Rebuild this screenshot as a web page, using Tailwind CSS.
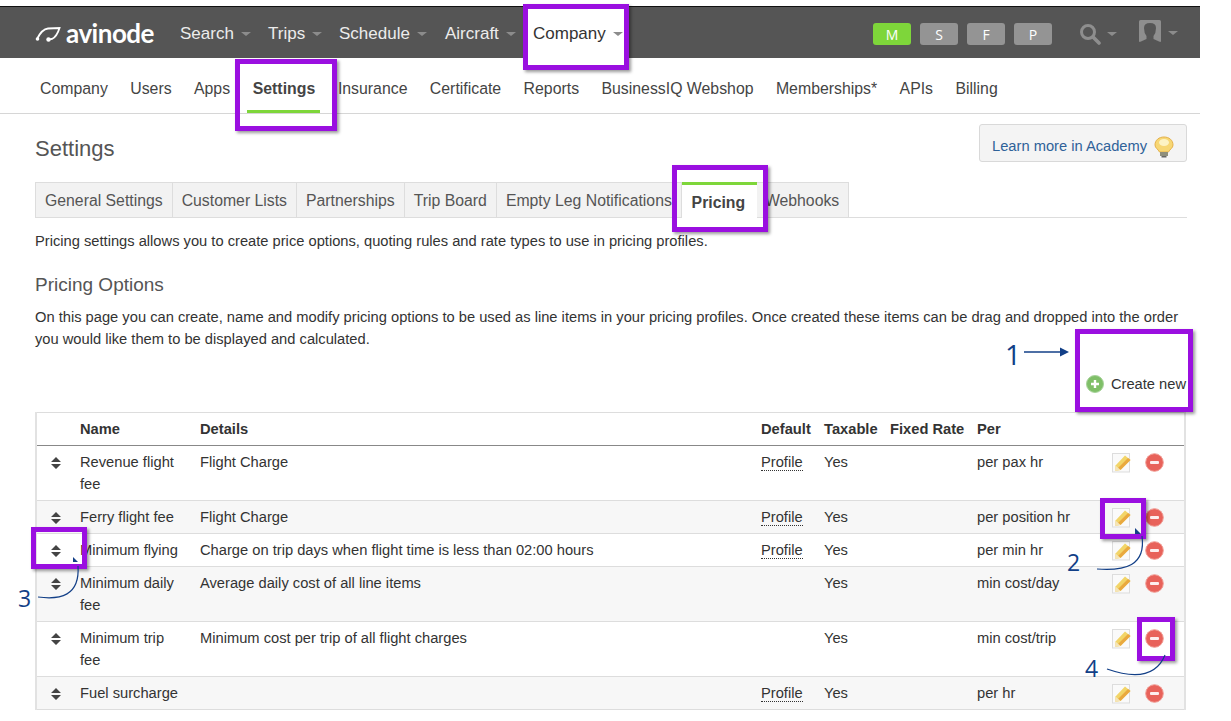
<!DOCTYPE html>
<html lang="en">
  <head>
    <meta charset="UTF-8" />
    <title>Pricing Options</title>
    <script src="https://cdn.jsdelivr.net/npm/@tailwindcss/browser@4"></script>
  </head>
  <body class="bg-white font-['Liberation_Sans',Arial,sans-serif] text-[#333]">
    <div class="relative w-[1200px] h-[711px] pt-[6px] overflow-hidden">
      <!-- Top nav -->
      <nav class="flex items-start h-[52px] bg-[#555] border-t border-[#111] text-[17px] text-[#ececec]">
        <a class="flex items-center ml-[35px] w-[145px] h-[51px] gap-[5px]">
          <svg class="w-[26px] h-[16px] mt-[3px]" viewBox="0 0 26 16" fill="none" stroke="white">
            <path d="M2 13 C5 7 8 3 13 2.500 L24.500 2 C23 7 21 11 17 13 L14 13.500" stroke-width="1.800" stroke-linecap="round" />
            <circle cx="2.500" cy="13" r="1.800" fill="white" stroke="none" />
            <circle cx="13.500" cy="13.500" r="2.200" fill="white" stroke="none" />
          </svg>
          <span class="font-['Lato',sans-serif] font-bold text-[26px] leading-[26px] tracking-[-0.5px] text-white">avinode</span>
        </a>
        <a class="flex items-center h-[51px] pt-[2px] w-[88px]">Search<i class="ml-[7px] w-0 h-0 border-x-[5px] border-t-[4px] border-x-transparent border-t-[#8c8c8c]"></i></a>
        <a class="flex items-center h-[51px] pt-[2px] w-[71px]">Trips<i class="ml-[7px] w-0 h-0 border-x-[5px] border-t-[4px] border-x-transparent border-t-[#8c8c8c]"></i></a>
        <a class="flex items-center h-[51px] pt-[2px] w-[106px]">Schedule<i class="ml-[7px] w-0 h-0 border-x-[5px] border-t-[4px] border-x-transparent border-t-[#8c8c8c]"></i></a>
        <a class="flex items-center h-[51px] pt-[2px] w-[83px]">Aircraft<i class="ml-[7px] w-0 h-0 border-x-[5px] border-t-[4px] border-x-transparent border-t-[#8c8c8c]"></i></a>
        <a class="flex items-center h-[60px] w-[100px] pl-[5px] pb-[7px] bg-white text-[#333]">Company<i class="ml-[7px] w-0 h-0 border-x-[5px] border-t-[4px] border-x-transparent border-t-[#8c8c8c]"></i></a>
        <div class="flex items-center h-[51px] ml-[245px] gap-[9px] text-[14px] font-['Open_Sans',sans-serif] text-white">
          <span class="flex items-center justify-center w-[38px] h-[22px] mt-[3px] rounded-[3px] bg-[#7ed63a]">M</span>
          <span class="flex items-center justify-center w-[38px] h-[22px] mt-[3px] rounded-[3px] bg-[#949494]">S</span>
          <span class="flex items-center justify-center w-[38px] h-[22px] mt-[3px] rounded-[3px] bg-[#949494]">F</span>
          <span class="flex items-center justify-center w-[38px] h-[22px] mt-[3px] rounded-[3px] bg-[#949494]">P</span>
        </div>
        <div class="flex items-center h-[51px] ml-[27px]">
          <svg class="w-[22px] h-[22px] mt-[2px]" viewBox="0 0 22 22" fill="none" stroke="#8e8e8e">
            <circle cx="9" cy="9" r="6.500" stroke-width="3" />
            <path d="M14 14 L20 20" stroke-width="3.600" stroke-linecap="round" />
          </svg>
          <i class="ml-[6px] mt-[2px] w-0 h-0 border-x-[5px] border-t-[4px] border-x-transparent border-t-[#8c8c8c]"></i>
          <svg class="ml-[21px] w-[24px] h-[23px] -mt-[3px]" viewBox="0 0 24 23">
            <path d="M1 1.500 Q1 0 2.500 0 H21.500 Q23 0 23 1.500 V21 Q23 22.500 21 21.500 L15.500 19 V16 Q18 13 18 8 Q18 3 12 3 Q6 3 6 8 Q6 13 8.500 16 V19 L3 21.500 Q1 22.500 1 21 Z" fill="#8e8e8e" />
          </svg>
          <i class="ml-[6px] w-0 h-0 border-x-[5px] border-t-[4px] border-x-transparent border-t-[#8c8c8c]"></i>
        </div>
      </nav>

      <!-- Sub nav -->
      <div class="flex h-[56px] pl-[40px] gap-[22.4px] border-b border-[#d6d6d6] text-[15.85px] text-[#444]">
        <a class="leading-[62px]">Company</a>
        <a class="leading-[62px]">Users</a>
        <a class="leading-[62px]">Apps</a>
        <a class="leading-[62px] h-[55px] -mx-[5px] font-bold border-b-[3px] border-[#7ed63a] w-[73px] text-center">Settings</a>
        <a class="leading-[62px]">Insurance</a>
        <a class="leading-[62px]">Certificate</a>
        <a class="leading-[62px]">Reports</a>
        <a class="leading-[62px]">BusinessIQ Webshop</a>
        <a class="leading-[62px]">Memberships*</a>
        <a class="leading-[62px]">APIs</a>
        <a class="leading-[62px]">Billing</a>
      </div>

      <!-- Content -->
      <div class="pl-[35px] pr-[13px]">
        <div class="flex justify-between items-start h-[68px] pt-[10px]">
          <h1 class="text-[22px] leading-[50px] text-[#555]">Settings</h1>
          <a class="flex items-center gap-[7px] w-[208px] h-[38px] pl-[12px] pt-[7px] border border-[#d9d9d9] rounded-[3px] bg-[#f4f4f4] text-[14.7px] text-[#2f6299]">
            Learn more in Academy
            <svg class="w-[20px] h-[22px]" viewBox="0 0 20 22">
              <path d="M10 1 C15 1 19 4 19 9 C19 12 16 13 14.500 16 H5.500 C4 13 1 12 1 9 C1 4 5 1 10 1 Z" fill="#f7d774" stroke="#e5b14a" />
              <ellipse cx="10" cy="6.500" rx="5" ry="3.500" fill="#fdf3c4" />
              <rect x="6" y="16" width="8" height="4" fill="#8f8f7c" />
              <rect x="7.500" y="20" width="5" height="1.500" fill="#666" />
            </svg>
          </a>
        </div>

        <!-- Tabs -->
        <div class="flex h-[36px] border-b border-[#ddd] text-[15.8px] text-[#555]">
          <a class="h-[36px] px-[9px] leading-[35px] bg-[#f2f2f2] border border-[#ddd]">General Settings</a>
          <a class="h-[36px] px-[9px] leading-[35px] bg-[#f2f2f2] border border-l-0 border-[#ddd]">Customer Lists</a>
          <a class="h-[36px] px-[9px] leading-[35px] bg-[#f2f2f2] border border-l-0 border-[#ddd]">Partnerships</a>
          <a class="h-[36px] px-[9px] leading-[35px] bg-[#f2f2f2] border border-l-0 border-[#ddd]">Trip Board</a>
          <a class="h-[36px] w-[185px] whitespace-nowrap overflow-hidden pl-[9px] leading-[35px] bg-[#f2f2f2] border border-l-0 border-[#ddd]">Empty Leg Notifications</a>
          <a class="h-[37px] w-[75px] pr-[2px] text-center leading-[35px] font-bold text-[#444] bg-white border-t-[3px] border-[#7ed63a]">Pricing</a>
          <a class="h-[36px] pl-[8px] w-[92px] leading-[35px] bg-[#f2f2f2] border border-l-0 border-[#ddd]">Webhooks</a>
        </div>

        <p class="mt-[13px] text-[14.7px] leading-[20px]">Pricing settings allows you to create price options, quoting rules and rate types to use in pricing profiles.</p>
        <h2 class="mt-[21px] text-[19px] leading-[26px] text-[#555]">Pricing Options</h2>
        <p class="mt-[8px] text-[14.7px] leading-[22px]">On this page you can create, name and modify pricing options to be used as line items in your pricing profiles. Once created these items can be drag and dropped into the order you would like them to be displayed and calculated.</p>

        <div class="flex justify-end items-end h-[62px] pb-[18px] mr-[1px] gap-[7px] text-[14.7px] leading-[20px]">
          <svg class="w-[18px] h-[18px] mb-[1px]" viewBox="0 0 18 18">
            <circle cx="9" cy="9" r="8.500" fill="#7fbf68" stroke="#a7d29a" />
            <path d="M9 5 V13 M5 9 H13" stroke="white" stroke-width="2.400" />
          </svg>
          Create new
        </div>

        <!-- Table -->
        <table class="w-[1151px] table-fixed border-collapse border-x-2 border-[#e2e2e2] text-[14.7px] leading-[22px] [&_td]:align-top [&_td]:pt-[5px] [&_td]:pb-[5px]">
          <colgroup>
            <col class="w-[44px]" />
            <col class="w-[120px]" />
            <col class="w-[561px]" />
            <col class="w-[63px]" />
            <col class="w-[66px]" />
            <col class="w-[87px]" />
            <col class="w-[135px]" />
            <col />
          </colgroup>
          <thead>
            <tr class="h-[33px] border-y border-t-[#ddd] border-b-[#888] text-left font-bold">
              <th></th>
              <th class="font-bold">Name</th>
              <th class="font-bold">Details</th>
              <th class="font-bold">Default</th>
              <th class="font-bold">Taxable</th>
              <th class="font-bold">Fixed Rate</th>
              <th class="font-bold">Per</th>
              <th></th>
            </tr>
          </thead>
          <tbody>
            <tr class="border-b border-[#ddd]">
              <td><svg class="ml-[14px] mt-[6px] w-[10px] h-[12px]" viewBox="0 0 10 12" fill="#444"><path d="M5 0 L10 5 H0 Z M5 12 L0 7 H10 Z" /></svg></td>
              <td class="pr-[16px]">Revenue flight fee</td>
              <td>Flight Charge</td>
              <td><span class="border-b border-dotted border-[#333]">Profile</span></td>
              <td>Yes</td>
              <td></td>
              <td>per pax hr</td>
              <td>
                <div class="flex gap-[13px] mt-[2px]">
                  <svg class="w-[20px] h-[20px]" viewBox="0 0 20 20"><rect x="0.500" y="0.500" width="17" height="18.500" fill="#fafafa" stroke="#ddd" /><path d="M3.500 12.500 L13 2.500 L18.500 7 L8.500 17 L3 18 Z" fill="#f2d568" /><path d="M8.500 17 L18.500 7 L16 5 L6 15 Z" fill="#e9a93f" /><path d="M3.500 12.500 L3 18 L8.500 17 Z" fill="#f4e4b8" /></svg>
                  <svg class="w-[19px] h-[19px]" viewBox="0 0 19 19"><circle cx="9.500" cy="9.500" r="8.800" fill="#e8625a" stroke="#f09a92" /><rect x="5" y="8" width="9" height="3" rx="1" fill="#fdeeee" /></svg>
                </div>
              </td>
            </tr>
            <tr class="border-b border-[#ddd] bg-[#f7f7f7]">
              <td><svg class="ml-[14px] mt-[6px] w-[10px] h-[12px]" viewBox="0 0 10 12" fill="#444"><path d="M5 0 L10 5 H0 Z M5 12 L0 7 H10 Z" /></svg></td>
              <td class="pr-[16px]">Ferry flight fee</td>
              <td>Flight Charge</td>
              <td><span class="border-b border-dotted border-[#333]">Profile</span></td>
              <td>Yes</td>
              <td></td>
              <td>per position hr</td>
              <td>
                <div class="flex gap-[13px] mt-[2px]">
                  <svg class="w-[20px] h-[20px]" viewBox="0 0 20 20"><rect x="0.500" y="0.500" width="17" height="18.500" fill="#fafafa" stroke="#ddd" /><path d="M3.500 12.500 L13 2.500 L18.500 7 L8.500 17 L3 18 Z" fill="#f2d568" /><path d="M8.500 17 L18.500 7 L16 5 L6 15 Z" fill="#e9a93f" /><path d="M3.500 12.500 L3 18 L8.500 17 Z" fill="#f4e4b8" /></svg>
                  <svg class="w-[19px] h-[19px]" viewBox="0 0 19 19"><circle cx="9.500" cy="9.500" r="8.800" fill="#e8625a" stroke="#f09a92" /><rect x="5" y="8" width="9" height="3" rx="1" fill="#fdeeee" /></svg>
                </div>
              </td>
            </tr>
            <tr class="border-b border-[#ddd]">
              <td><svg class="ml-[14px] mt-[6px] w-[10px] h-[12px]" viewBox="0 0 10 12" fill="#444"><path d="M5 0 L10 5 H0 Z M5 12 L0 7 H10 Z" /></svg></td>
              <td class="pr-[16px]">Minimum flying</td>
              <td>Charge on trip days when flight time is less than 02:00 hours</td>
              <td><span class="border-b border-dotted border-[#333]">Profile</span></td>
              <td>Yes</td>
              <td></td>
              <td>per min hr</td>
              <td>
                <div class="flex gap-[13px] mt-[2px]">
                  <svg class="w-[20px] h-[20px]" viewBox="0 0 20 20"><rect x="0.500" y="0.500" width="17" height="18.500" fill="#fafafa" stroke="#ddd" /><path d="M3.500 12.500 L13 2.500 L18.500 7 L8.500 17 L3 18 Z" fill="#f2d568" /><path d="M8.500 17 L18.500 7 L16 5 L6 15 Z" fill="#e9a93f" /><path d="M3.500 12.500 L3 18 L8.500 17 Z" fill="#f4e4b8" /></svg>
                  <svg class="w-[19px] h-[19px]" viewBox="0 0 19 19"><circle cx="9.500" cy="9.500" r="8.800" fill="#e8625a" stroke="#f09a92" /><rect x="5" y="8" width="9" height="3" rx="1" fill="#fdeeee" /></svg>
                </div>
              </td>
            </tr>
            <tr class="border-b border-[#ddd] bg-[#f7f7f7]">
              <td><svg class="ml-[14px] mt-[6px] w-[10px] h-[12px]" viewBox="0 0 10 12" fill="#444"><path d="M5 0 L10 5 H0 Z M5 12 L0 7 H10 Z" /></svg></td>
              <td class="pr-[16px]">Minimum daily fee</td>
              <td>Average daily cost of all line items</td>
              <td></td>
              <td>Yes</td>
              <td></td>
              <td>min cost/day</td>
              <td>
                <div class="flex gap-[13px] mt-[2px]">
                  <svg class="w-[20px] h-[20px]" viewBox="0 0 20 20"><rect x="0.500" y="0.500" width="17" height="18.500" fill="#fafafa" stroke="#ddd" /><path d="M3.500 12.500 L13 2.500 L18.500 7 L8.500 17 L3 18 Z" fill="#f2d568" /><path d="M8.500 17 L18.500 7 L16 5 L6 15 Z" fill="#e9a93f" /><path d="M3.500 12.500 L3 18 L8.500 17 Z" fill="#f4e4b8" /></svg>
                  <svg class="w-[19px] h-[19px]" viewBox="0 0 19 19"><circle cx="9.500" cy="9.500" r="8.800" fill="#e8625a" stroke="#f09a92" /><rect x="5" y="8" width="9" height="3" rx="1" fill="#fdeeee" /></svg>
                </div>
              </td>
            </tr>
            <tr class="border-b border-[#ddd]">
              <td><svg class="ml-[14px] mt-[6px] w-[10px] h-[12px]" viewBox="0 0 10 12" fill="#444"><path d="M5 0 L10 5 H0 Z M5 12 L0 7 H10 Z" /></svg></td>
              <td class="pr-[16px]">Minimum trip fee</td>
              <td>Minimum cost per trip of all flight charges</td>
              <td></td>
              <td>Yes</td>
              <td></td>
              <td>min cost/trip</td>
              <td>
                <div class="flex gap-[13px] mt-[2px]">
                  <svg class="w-[20px] h-[20px]" viewBox="0 0 20 20"><rect x="0.500" y="0.500" width="17" height="18.500" fill="#fafafa" stroke="#ddd" /><path d="M3.500 12.500 L13 2.500 L18.500 7 L8.500 17 L3 18 Z" fill="#f2d568" /><path d="M8.500 17 L18.500 7 L16 5 L6 15 Z" fill="#e9a93f" /><path d="M3.500 12.500 L3 18 L8.500 17 Z" fill="#f4e4b8" /></svg>
                  <svg class="w-[19px] h-[19px]" viewBox="0 0 19 19"><circle cx="9.500" cy="9.500" r="8.800" fill="#e8625a" stroke="#f09a92" /><rect x="5" y="8" width="9" height="3" rx="1" fill="#fdeeee" /></svg>
                </div>
              </td>
            </tr>
            <tr class="border-b border-[#ddd] bg-[#f7f7f7]">
              <td><svg class="ml-[14px] mt-[6px] w-[10px] h-[12px]" viewBox="0 0 10 12" fill="#444"><path d="M5 0 L10 5 H0 Z M5 12 L0 7 H10 Z" /></svg></td>
              <td class="pr-[16px]">Fuel surcharge</td>
              <td></td>
              <td><span class="border-b border-dotted border-[#333]">Profile</span></td>
              <td>Yes</td>
              <td></td>
              <td>per hr</td>
              <td>
                <div class="flex gap-[13px] mt-[2px]">
                  <svg class="w-[20px] h-[20px]" viewBox="0 0 20 20"><rect x="0.500" y="0.500" width="17" height="18.500" fill="#fafafa" stroke="#ddd" /><path d="M3.500 12.500 L13 2.500 L18.500 7 L8.500 17 L3 18 Z" fill="#f2d568" /><path d="M8.500 17 L18.500 7 L16 5 L6 15 Z" fill="#e9a93f" /><path d="M3.500 12.500 L3 18 L8.500 17 Z" fill="#f4e4b8" /></svg>
                  <svg class="w-[19px] h-[19px]" viewBox="0 0 19 19"><circle cx="9.500" cy="9.500" r="8.800" fill="#e8625a" stroke="#f09a92" /><rect x="5" y="8" width="9" height="3" rx="1" fill="#fdeeee" /></svg>
                </div>
              </td>
            </tr>
          </tbody>
        </table>
      </div>

      <!-- Annotation highlights -->
      <div class="absolute left-[523px] top-[4px] w-[106px] h-[66px] border-[5px] border-[#9a0fe0] shadow-[2px_2px_3px_rgba(0,0,0,0.4)]"></div>
      <div class="absolute left-[235px] top-[59px] w-[102px] h-[72px] border-[5px] border-[#9a0fe0] shadow-[2px_2px_3px_rgba(0,0,0,0.4)]"></div>
      <div class="absolute left-[672px] top-[165px] w-[96px] h-[67px] border-[5px] border-[#9a0fe0] shadow-[2px_2px_3px_rgba(0,0,0,0.4)]"></div>
      <div class="absolute left-[1075px] top-[329px] w-[118px] h-[83px] border-[5px] border-[#9a0fe0] shadow-[2px_2px_3px_rgba(0,0,0,0.4)]"></div>
      <div class="absolute left-[1100px] top-[498px] w-[46px] h-[41px] border-[5px] border-[#9a0fe0] shadow-[2px_2px_3px_rgba(0,0,0,0.4)]"></div>
      <div class="absolute left-[31px] top-[527px] w-[56px] h-[42px] border-[5px] border-[#9a0fe0] shadow-[2px_2px_3px_rgba(0,0,0,0.4)]"></div>
      <div class="absolute left-[1137px] top-[617px] w-[38px] h-[44px] border-[5px] border-[#9a0fe0] shadow-[2px_2px_3px_rgba(0,0,0,0.4)]"></div>

      <!-- Callout arrows and numbers -->
      <svg class="absolute left-0 top-0 w-[1200px] h-[711px] pointer-events-none" viewBox="0 0 1200 711" fill="none" stroke="#123f87">
        <path d="M1024 352 H1060" stroke-width="1.500" />
        <path d="M1060 347.500 L1069 352 L1060 356.500 Z" fill="#123f87" stroke="none" />
        <path d="M1097 569 C1125 571 1146 566 1142 536" stroke-width="1.200" />
        <path d="M1135 528 L1141 534 L1135 534 Z" fill="#123f87" stroke="none" />
        <path d="M38 597 C60 600 80 596 78 566" stroke-width="1.200" />
        <path d="M73 557 L78 562 L73 562 Z" fill="#123f87" stroke="none" />
        <path d="M1107 669 C1130 677 1155 680 1165 655" stroke-width="1.200" />
      </svg>
      <span class="absolute left-[1005px] top-[337px] text-[28px] leading-[34px] text-[#123f87] font-['Open_Sans',sans-serif]">1</span>
      <span class="absolute left-[1067px] top-[548px] text-[23px] leading-[28px] text-[#123f87] font-['Open_Sans',sans-serif]">2</span>
      <span class="absolute left-[18px] top-[584px] text-[23px] leading-[28px] text-[#123f87] font-['Open_Sans',sans-serif]">3</span>
      <span class="absolute left-[1085px] top-[654px] text-[23px] leading-[28px] text-[#123f87] font-['Open_Sans',sans-serif]">4</span>
    </div>
  </body>
</html>
